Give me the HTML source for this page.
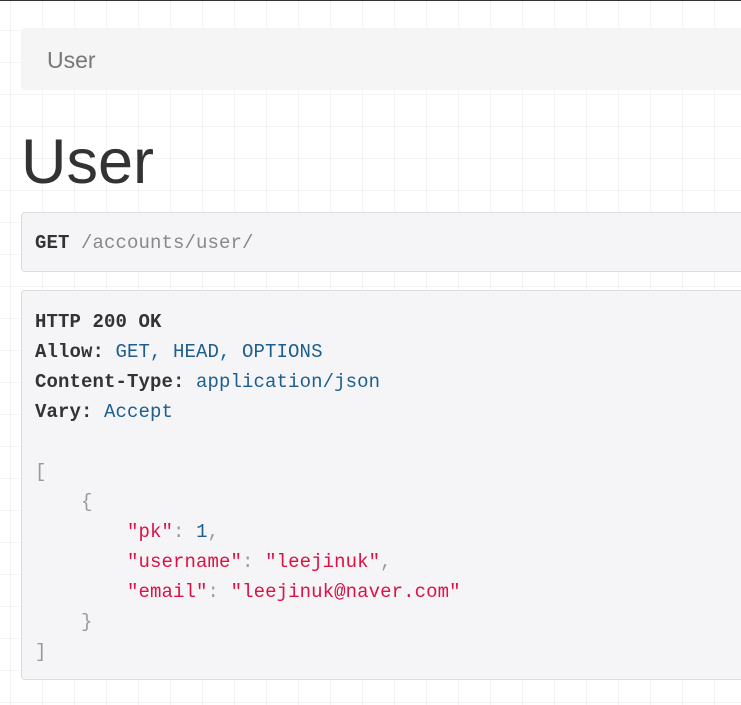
<!DOCTYPE html>
<html><head><meta charset="utf-8"><style>
html,body{margin:0;padding:0;}
body{width:741px;height:705px;overflow:hidden;position:relative;background:#fff;
background-image:linear-gradient(#f4f4f4 1px,transparent 1px),linear-gradient(90deg,#f4f4f4 1px,transparent 1px);
background-size:32px 32px;background-position:10px 30px;font-family:"Liberation Sans",sans-serif;}
.top{position:absolute;left:0;top:0;width:741px;height:1px;background:#333;}
.bc{position:absolute;left:21px;top:28px;width:740px;height:62px;background:#f5f5f5;border-radius:4px;}
.bc span{position:absolute;left:26px;top:19px;font-size:23px;color:#777;}
h1{position:absolute;left:21px;top:127px;margin:0;font-weight:400;font-size:63px;color:#333;line-height:70px;}
.box{position:absolute;left:21px;width:740px;background:#f5f5f7;border:1px solid #ddd;border-radius:4px;box-sizing:border-box;
font-family:"Liberation Mono",monospace;font-size:19px;color:#333;}
.get{top:212px;height:60px;}
.get pre{margin:0;position:absolute;left:13px;top:19px;}
.resp{top:290px;height:390px;}
.resp pre{margin:0;position:absolute;left:13px;top:16px;line-height:30px;}
pre{font-family:"Liberation Mono",monospace;font-size:19px;letter-spacing:0.1px;}
b{font-weight:bold;color:#333;}
.m{color:#888;}.v{color:#1d5e8e;}.s{color:#dd1144;}.p{color:#999;}
</style></head><body>
<div class="top"></div>
<div class="bc"><span>User</span></div>
<h1>User</h1>
<div class="box get"><pre><b>GET</b> <span class="m">/accounts/user/</span></pre></div>
<div class="box resp"><pre><b>HTTP 200 OK</b>
<b>Allow:</b> <span class="v">GET, HEAD, OPTIONS</span>
<b>Content-Type:</b> <span class="v">application/json</span>
<b>Vary:</b> <span class="v">Accept</span>

<span class="p">[</span>
    <span class="p">{</span>
        <span class="s">"pk"</span><span class="p">:</span> <span class="v">1</span><span class="p">,</span>
        <span class="s">"username"</span><span class="p">:</span> <span class="s">"leejinuk"</span><span class="p">,</span>
        <span class="s">"email"</span><span class="p">:</span> <span class="s">"leejinuk@naver.com"</span>
    <span class="p">}</span>
<span class="p">]</span></pre></div>
</body></html>
